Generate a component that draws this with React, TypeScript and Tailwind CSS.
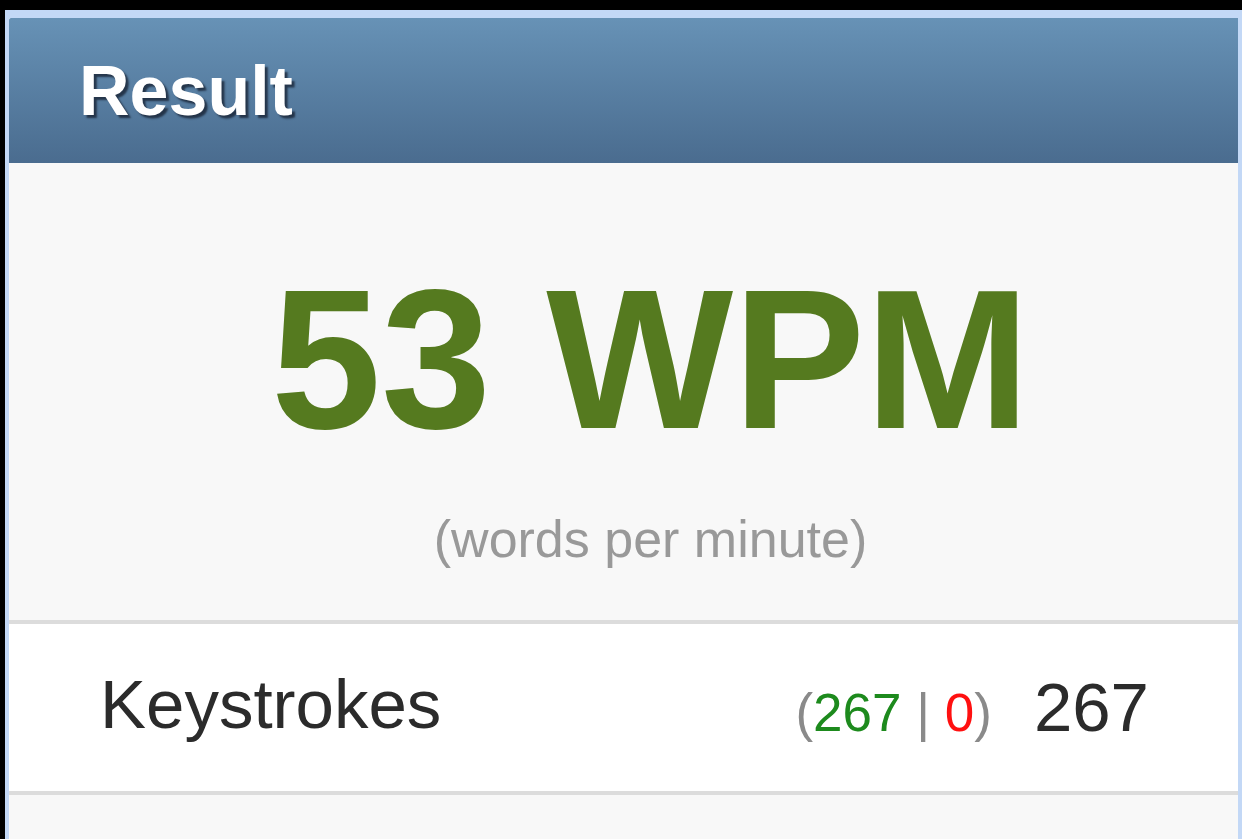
export default function App() {
  return (
    <div className="w-[1242px] h-[839px] overflow-hidden bg-black pt-[10px] pl-[5px] font-['Liberation_Sans',Arial,sans-serif]">
      <div className="h-full border-t-[8px] border-x-[4px] border-[#c3d8f6] bg-[#f8f8f8] flex flex-col">
        {/* Header */}
        <div className="h-[145px] shrink-0 flex items-center pl-[70px] rounded-tl-[2px] bg-gradient-to-b from-[#6792b6] to-[#4a6c8f]">
          <h1 className="text-[70px] leading-none font-bold text-white [text-shadow:3px_3px_2px_rgba(20,30,45,0.75)]">
            Result
          </h1>
        </div>

        {/* Speed */}
        <div className="h-[457px] shrink-0 flex flex-col items-center pt-[98px] pl-[54px]">
          <div className="text-[198px] leading-none font-bold text-[#557a1f]">53 WPM</div>
          <div className="mt-[54px] text-[52px] leading-none text-[#999999]">(words per minute)</div>
        </div>

        {/* Keystrokes row */}
        <div className="h-[175px] shrink-0 flex items-center justify-between border-y-[4px] border-[#dcdcdc] bg-white pl-[91px] pr-[89px]">
          <span className="text-[69px] leading-none text-[#2b2b2b] pb-[6px]">Keystrokes</span>
          <span className="flex items-baseline">
            <span className="text-[53px] leading-none text-[#8a8a8a]">
              (<span className="text-[#1d8a1d]">267</span> | <span className="text-[#ff1010]">0</span>)
            </span>
            <span className="ml-[42px] text-[69px] leading-none text-[#2b2b2b]">267</span>
          </span>
        </div>

        <div className="flex-1 bg-[#f8f8f8]" />
      </div>
    </div>
  );
}
